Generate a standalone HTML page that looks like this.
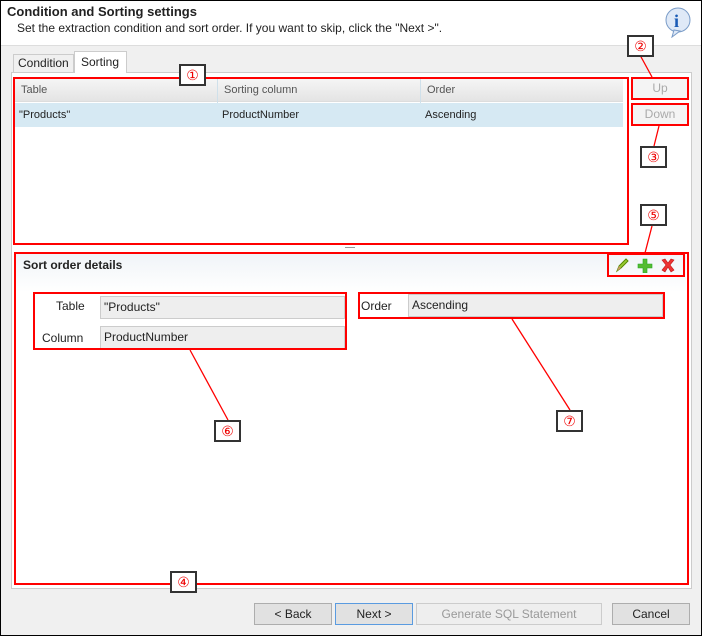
<!DOCTYPE html><html><head><style>
*{margin:0;padding:0;box-sizing:border-box}
body{width:702px;height:636px;position:relative;overflow:hidden;font-family:"Liberation Sans",sans-serif;font-size:12px;color:#222;background:#f0f0f0}
.a{position:absolute}
.rb{position:absolute;border:2px solid #f00}
.num{position:absolute;background:#fff;border:2px solid #333;color:#e00;font-size:14px;text-align:center;line-height:18px;width:27px;height:22px}
.btn{position:absolute;top:603px;height:22px;border:1px solid #adadad;background:#e1e1e1;text-align:center;line-height:20px;font-size:12px}
.fld{position:absolute;background:#eee;border:1px solid #ccc;padding-left:3px;line-height:21px}
</style></head><body>
<div class="a" style="left:0;top:0;width:702px;height:636px;border:1px solid #000;z-index:9;pointer-events:none"></div>
<div class="a" style="left:0;top:0;width:702px;height:46px;background:#fff;border-bottom:1px solid #ddd"></div>
<div class="a" style="left:7px;top:4px;font-weight:bold;font-size:13px">Condition and Sorting settings</div>
<div class="a" style="left:17px;top:21px">Set the extraction condition and sort order. If you want to skip, click the "Next &gt;".</div>
<svg class="a" style="left:664px;top:6px" width="30" height="32"><circle cx="14" cy="14" r="12" fill="#dfe9f7" stroke="#7a9cc8"/><path d="M10 24 L8 31 L16 25Z" fill="#dfe9f7" stroke="#7a9cc8"/><text x="10" y="21" font-family="Liberation Serif" font-weight="bold" font-size="18" fill="#1a5bb5">i</text></svg>
<div class="a" style="left:13px;top:54px;width:61px;height:19px;border:1px solid #ccc;background:#f0f0f0;padding-left:4px;line-height:17px">Condition</div>
<div class="a" style="left:74px;top:51px;width:53px;height:22px;border:1px solid #ccc;border-bottom:none;background:#fff;padding-left:6px;line-height:20px;z-index:2">Sorting</div>
<div class="a" style="left:11px;top:72px;width:681px;height:517px;border:1px solid #ccc;background:#fff"></div>
<div class="a" style="left:15px;top:79px;width:608px;height:23px;background:linear-gradient(#f5f5f5,#e4e4e4);border-bottom:1px solid #ddd"></div>
<div class="a" style="left:217px;top:79px;width:1px;height:48px;background:#cfe0ea"></div>
<div class="a" style="left:420px;top:79px;width:1px;height:48px;background:#cfe0ea"></div>
<div class="a" style="left:21px;top:84px;color:#555;font-size:11px">Table</div>
<div class="a" style="left:224px;top:84px;color:#555;font-size:11px">Sorting column</div>
<div class="a" style="left:427px;top:84px;color:#555;font-size:11px">Order</div>
<div class="a" style="left:15px;top:103px;width:608px;height:24px;background:#d6e9f3"></div>
<div class="a" style="left:19px;top:109px;font-size:11px">"Products"</div>
<div class="a" style="left:222px;top:109px;font-size:11px">ProductNumber</div>
<div class="a" style="left:425px;top:109px;font-size:11px">Ascending</div>
<div class="rb" style="left:13px;top:77px;width:616px;height:168px"></div>
<div class="a" style="left:632px;top:78px;width:56px;height:21px;background:#f4f4f4;color:#aaa;text-align:center;line-height:21px">Up</div>
<div class="a" style="left:632px;top:104px;width:56px;height:21px;background:#f4f4f4;color:#aaa;text-align:center;line-height:21px">Down</div>
<div class="rb" style="left:631px;top:77px;width:58px;height:23px"></div>
<div class="rb" style="left:631px;top:103px;width:58px;height:23px"></div>
<div class="a" style="left:345px;top:247px;width:10px;height:1px;background:#999"></div>
<div class="a" style="left:16px;top:254px;width:670px;height:38px;background:linear-gradient(#f0f4f8,#fff)"></div>
<div class="a" style="left:23px;top:258px;font-weight:bold;font-size:12px">Sort order details</div>
<div class="rb" style="left:14px;top:252px;width:675px;height:333px"></div>
<div class="rb" style="left:607px;top:253px;width:78px;height:24px"></div>
<svg class="a" style="left:614px;top:257px" width="66" height="16"><path d="M3 14 L5 9 L12 2 L14 4 L7 11Z" fill="#9c3" stroke="#580"/><path d="M3 14 L5 9 L7 11Z" fill="#c96"/><path d="M29 2h4v5h5v4h-5v5h-4v-5h-5v-4h5z" fill="#5b3" stroke="#2a2" stroke-width=".6"/><path d="M48 3 L51 2 L54 6 L57 2 L60 3 L56 8 L60 13 L57 15 L54 10 L51 15 L48 13 L52 8Z" fill="#e33" stroke="#b11" stroke-width=".6"/></svg>
<div class="a" style="left:56px;top:299px">Table</div>
<div class="a" style="left:42px;top:331px">Column</div>
<div class="fld" style="left:100px;top:296px;width:245px;height:23px">"Products"</div>
<div class="fld" style="left:100px;top:326px;width:245px;height:23px">ProductNumber</div>
<div class="rb" style="left:33px;top:292px;width:314px;height:58px"></div>
<div class="a" style="left:361px;top:299px">Order</div>
<div class="fld" style="left:408px;top:294px;width:255px;height:23px">Ascending</div>
<div class="rb" style="left:358px;top:292px;width:307px;height:27px"></div>
<svg class="a" style="left:0;top:0" width="702" height="636"><g stroke="#f00" stroke-width="1.3"><line x1="640" y1="55" x2="652" y2="77"/><line x1="659" y1="126" x2="654" y2="146"/><line x1="652" y1="226" x2="645" y2="253"/><line x1="190" y1="350" x2="228" y2="420"/><line x1="512" y1="319" x2="570" y2="410"/></g></svg>
<div class="num" style="left:179px;top:64px">①</div>
<div class="num" style="left:627px;top:35px">②</div>
<div class="num" style="left:640px;top:146px">③</div>
<div class="num" style="left:640px;top:204px">⑤</div>
<div class="num" style="left:214px;top:420px">⑥</div>
<div class="num" style="left:556px;top:410px">⑦</div>
<div class="num" style="left:170px;top:571px">④</div>
<div class="btn" style="left:254px;width:78px">&lt; Back</div>
<div class="btn" style="left:335px;width:78px;border-color:#5a9be0">Next &gt;</div>
<div class="btn" style="left:416px;width:186px;background:#eee;border-color:#ccc;color:#999">Generate SQL Statement</div>
<div class="btn" style="left:612px;width:78px">Cancel</div>
</body></html>
